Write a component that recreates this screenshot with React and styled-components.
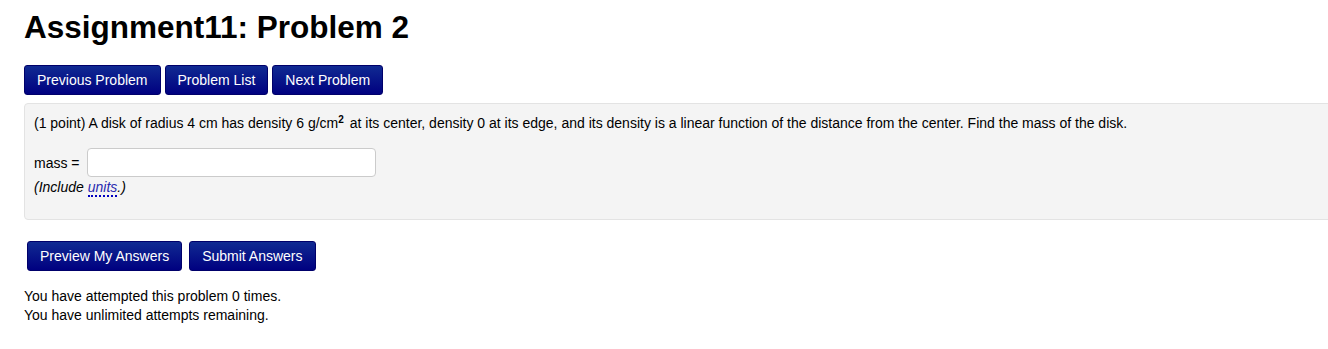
import React from 'react';
import styled, { createGlobalStyle } from 'styled-components';

const GlobalStyle = createGlobalStyle`
  body {
    margin: 0;
    background: #fff;
    font-family: "Liberation Sans", Arial, sans-serif;
    color: #000;
    overflow: hidden;
  }
`;

const Page = styled.div`
  padding: 8px 0 0 24px;
`;

const Title = styled.h1`
  margin: 0;
  font-size: 31.5px;
  font-weight: bold;
  line-height: 38px;
`;

const NavBar = styled.div`
  display: flex;
  gap: 4px;
  margin-top: 19px;
`;

const Button = styled.button`
  height: 30px;
  padding: 0 12px;
  font-family: "Liberation Sans", Arial, sans-serif;
  font-size: 14px;
  color: #fff;
  background: linear-gradient(#102a92, #000080);
  border: 1px solid #00006a;
  border-radius: 3px;
  cursor: pointer;
`;

const ProblemBox = styled.div`
  margin-top: 8px;
  margin-right: -4px;
  background: #f4f4f4;
  border: 1px solid #e3e3e3;
  border-radius: 4px;
  padding: 10px 9px 23px;
  font-size: 14px;
`;

const Statement = styled.p`
  margin: 0;
  line-height: 18px;
  sup {
    font-size: 10px;
    line-height: 0;
    vertical-align: 5px;
    font-weight: bold;
    margin-right: 2px;
  }
`;

const AnswerRow = styled.div`
  display: flex;
  align-items: center;
  gap: 7px;
  margin-top: 16px;
`;

const AnswerInput = styled.input`
  width: 289px;
  height: 29px;
  box-sizing: border-box;
  border: 1px solid #cbcbcb;
  border-radius: 4px;
  background: #fff;
  font-size: 14px;
  padding: 0 6px;
`;

const Hint = styled.div`
  margin-top: 1px;
  font-style: italic;
  line-height: 18px;
`;

const UnitsLink = styled.span`
  color: #2a2ab0;
  border-bottom: 2px dotted #0000c0;
`;

const SubmitBar = styled.div`
  display: flex;
  gap: 7px;
  margin: 21px 0 0 3px;
`;

const Status = styled.div`
  margin-top: 16px;
  font-size: 14px;
  line-height: 19px;
`;

export default function App() {
  return (
    <Page>
      <GlobalStyle />
      <Title>Assignment11: Problem 2</Title>
      <NavBar>
        <Button>Previous Problem</Button>
        <Button>Problem List</Button>
        <Button>Next Problem</Button>
      </NavBar>
      <ProblemBox>
        <Statement>
          (1 point) A disk of radius 4 cm has density 6 g/cm<sup>2</sup> at its center, density 0 at its
          edge, and its density is a linear function of the distance from the center. Find the mass of
          the disk.
        </Statement>
        <AnswerRow>
          <span>mass =</span>
          <AnswerInput type="text" />
        </AnswerRow>
        <Hint>
          (Include <UnitsLink>units</UnitsLink>.)
        </Hint>
      </ProblemBox>
      <SubmitBar>
        <Button>Preview My Answers</Button>
        <Button>Submit Answers</Button>
      </SubmitBar>
      <Status>
        You have attempted this problem 0 times.
        <br />
        You have unlimited attempts remaining.
      </Status>
    </Page>
  );
}
